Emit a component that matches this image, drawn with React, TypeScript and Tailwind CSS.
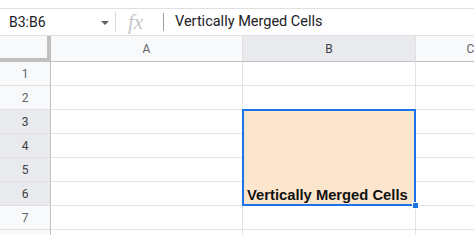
import React from 'react';

const font = { fontFamily: 'Roboto, "Liberation Sans", Arial, sans-serif' };

const rows = [1, 2, 3, 4, 5, 6, 7, 8];
const selectedRows = new Set([3, 4, 5, 6]);

function FormulaBar() {
  return (
    <div className="flex h-[27px] items-center border-b border-[#e0e0e0] bg-white text-[14px] text-[#202124]">
      <div className="flex w-[115px] items-center justify-between pl-[9px] pr-[6px]">
        <span>B3:B6</span>
        <svg width="8" height="4" viewBox="0 0 8 4" className="mt-[1px]">
          <path d="M0 0 L8 0 L4 4 Z" fill="#5f6368" />
        </svg>
      </div>
      <div className="h-[20px] w-px bg-[#dadce0]" />
      <span
        className="ml-[12px] w-[26px] text-[21px] italic leading-none text-[#c4c7cb]"
        style={{ fontFamily: '"Liberation Serif", "DejaVu Serif", serif' }}
      >
        fx
      </span>
      <div className="ml-[9px] h-[18px] w-px bg-[#9aa0a6]" />
      <span className="ml-[11px] text-[14.5px]">Vertically Merged Cells</span>
    </div>
  );
}

export default function App() {
  return (
    <div className="h-[235px] w-[474px] overflow-hidden bg-white" style={font}>
      <div className="h-[9px] border-b border-[#e0e0e0]" />
      <FormulaBar />
      <div className="grid w-[560px] grid-cols-[51px_192px_173px_110px_1fr] grid-rows-[26px_repeat(8,24px)]">
        {/* header row */}
        <div className="border-b-4 border-r-4 border-[#c0c0c0] bg-[#f8f9fa]" />
        <div className="flex items-center justify-center border-b border-r border-[#c0c0c0] border-r-[#e0e0e0] bg-[#f8f9fa] text-[12px] text-[#5f6368]">
          A
        </div>
        <div className="flex items-center justify-center border-b border-r border-[#c0c0c0] border-r-[#e0e0e0] bg-[#e8eaed] text-[12px] text-[#3c4043]">
          B
        </div>
        <div className="flex items-center justify-center border-b border-r border-[#c0c0c0] border-r-[#e0e0e0] bg-[#f8f9fa] text-[12px] text-[#5f6368]">
          C
        </div>
        <div className="border-b border-[#c0c0c0] bg-[#f8f9fa]" />

        {rows.map((r) => (
          <React.Fragment key={r}>
            <div
              className={`flex items-center justify-center border-b border-r border-[#c0c0c0] border-b-[#e0e0e0] text-[12px] ${
                selectedRows.has(r) ? 'bg-[#e8eaed] text-[#3c4043]' : 'bg-[#f8f9fa] text-[#5f6368]'
              }`}
            >
              {r < 8 ? r : ''}
            </div>
            <div className="border-b border-r border-[#e2e3e3]" />
            {r === 3 && (
              <div className="relative row-span-4 -ml-px -mt-px flex h-[97px] items-end border-2 border-[#1a73e8] bg-[#fce5cd] pl-[3px]">
                <span
                  className="text-[14.75px] font-bold leading-[17px] text-[#111]"
                  style={{ fontFamily: '"Liberation Sans", Arial, sans-serif' }}
                >
                  Vertically Merged Cells
                </span>
                <div className="absolute -bottom-[5px] -right-[5px] h-[7px] w-[7px] border border-white bg-[#1a73e8]" />
              </div>
            )}
            {!selectedRows.has(r) && <div className="border-b border-r border-[#e2e3e3]" />}
            <div className="border-b border-r border-[#e2e3e3]" />
            <div className="border-b border-[#e2e3e3]" />
          </React.Fragment>
        ))}
      </div>
    </div>
  );
}
